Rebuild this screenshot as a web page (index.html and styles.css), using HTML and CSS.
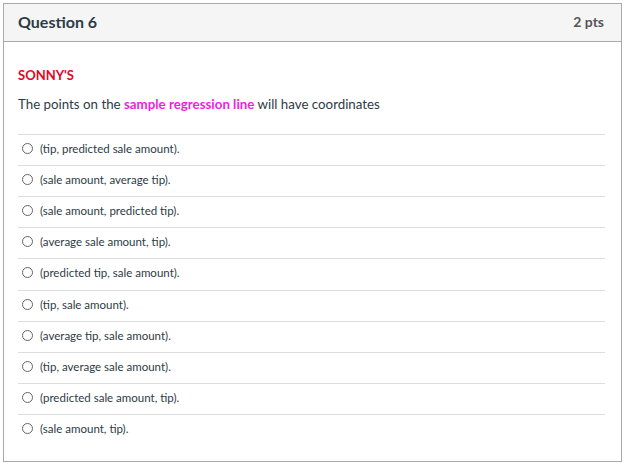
FILE: index.html
```
<!DOCTYPE html>
<html lang="en">
<head>
    <meta charset="UTF-8">
    <title>Question 6</title>
    <link rel="stylesheet" href="styles.css">
</head>
<body>
    <div class="question">
        <div class="question-header">
            <h2>Question 6</h2>
            <span class="points">2 pts</span>
        </div>
        <div class="question-body">
            <p class="label">SONNY'S</p>
            <p class="prompt">The points on the <span class="hl">sample regression line</span> will have coordinates</p>
            <div class="answers">
                <label class="answer"><span class="radio"></span>(tip, predicted sale amount).</label>
                <label class="answer"><span class="radio"></span>(sale amount, average tip).</label>
                <label class="answer"><span class="radio"></span>(sale amount, predicted tip).</label>
                <label class="answer"><span class="radio"></span>(average sale amount, tip).</label>
                <label class="answer"><span class="radio"></span>(predicted tip, sale amount).</label>
                <label class="answer"><span class="radio"></span>(tip, sale amount).</label>
                <label class="answer"><span class="radio"></span>(average tip, sale amount).</label>
                <label class="answer"><span class="radio"></span>(tip, average sale amount).</label>
                <label class="answer"><span class="radio"></span>(predicted sale amount, tip).</label>
                <label class="answer"><span class="radio"></span>(sale amount, tip).</label>
            </div>
        </div>
    </div>
</body>
</html>
```

FILE: styles.css
```
* {
    margin: 0;
    padding: 0;
    box-sizing: border-box;
}

body {
    background: #fff;
    color: #2d3b45;
    font-family: Lato, "Open Sans", sans-serif;
    padding: 3px;
}

.question {
    width: 619px;
    height: 459px;
    border: 1px solid #a9a9a9;
}

.question-header {
    display: flex;
    justify-content: space-between;
    align-items: center;
    height: 38px;
    padding: 0 17px 2px 14px;
    background: #f5f5f5;
    border-bottom: 1px solid #a9a9a9;
}

.question-header h2 {
    font-size: 16px;
    font-weight: bold;
    color: #2d3b45;
}

.points {
    font-size: 14px;
    font-weight: bold;
    color: #555;
}

.question-body {
    padding: 23px 16px 0 14px;
}

.label {
    color: #e0061f;
    font-size: 13px;
    font-weight: bold;
    line-height: 20px;
}

.prompt {
    margin-top: 9px;
    font-size: 13.3px;
    line-height: 20px;
}

.hl {
    color: #f01ee0;
    font-weight: bold;
}

.answers {
    margin-top: 20px;
}

.answer {
    display: flex;
    align-items: center;
    gap: 7px;
    height: 31.12px;
    padding: 0 0 3px 4px;
    border-top: 1px solid #ddd;
    font-size: 11.5px;
}

.radio {
    width: 11px;
    height: 11px;
    border: 1px solid #666;
    border-radius: 50%;
}
```
